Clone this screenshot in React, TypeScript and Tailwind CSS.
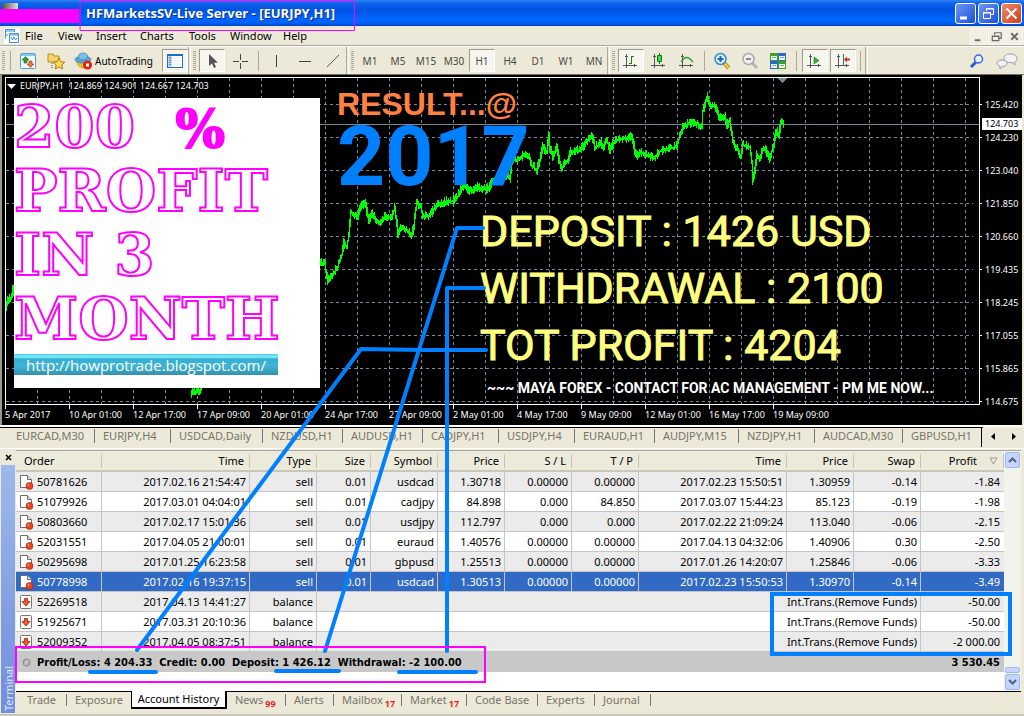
import type { ReactNode } from 'react';

const MENU: [string, string][] = [
  ['File', 'w-[33px]'],
  ['View', 'w-[38px]'],
  ['Insert', 'w-[44px]'],
  ['Charts', 'w-[49px]'],
  ['Tools', 'w-[41px]'],
  ['Window', 'w-[53px]'],
  ['Help', 'w-[33px]'],
];

const CHART_TABS: [string, string][] = [
  ['EURCAD,M30', 'w-[87px]'],
  ['EURJPY,H4', 'w-[76px]'],
  ['USDCAD,Daily', 'w-[92px]'],
  ['NZDUSD,H1', 'w-[80px]'],
  ['AUDUSD,H1', 'w-[80px]'],
  ['CADJPY,H1', 'w-[76px]'],
  ['USDJPY,H4', 'w-[76px]'],
  ['EURAUD,H1', 'w-[80px]'],
  ['AUDJPY,M15', 'w-[84px]'],
  ['NZDJPY,H1', 'w-[76px]'],
  ['AUDCAD,M30', 'w-[88px]'],
];

const PRICES = ['125.420', '124.230', '123.040', '121.850', '120.660', '119.435', '118.245', '117.055', '115.865', '114.675'];

const TIMES = [
  '5 Apr 2017', '10 Apr 01:00', '12 Apr 17:00', '17 Apr 09:00', '20 Apr 01:00', '24 Apr 17:00', '27 Apr 09:00',
  '2 May 01:00', '4 May 17:00', '9 May 09:00', '12 May 01:00', '16 May 17:00', '19 May 09:00',
];

const TRADES = [
  ['50781626', '2017.02.16 21:54:47', 'sell', '0.01', 'usdcad', '1.30718', '0.00000', '0.00000', '2017.02.23 15:50:51', '1.30959', '-0.14', '-1.84'],
  ['51079926', '2017.03.01 04:04:01', 'sell', '0.01', 'cadjpy', '84.898', '0.000', '84.850', '2017.03.07 15:44:23', '85.123', '-0.19', '-1.98'],
  ['50803660', '2017.02.17 15:01:36', 'sell', '0.01', 'usdjpy', '112.797', '0.000', '0.000', '2017.02.22 21:09:24', '113.040', '-0.06', '-2.15'],
  ['52031551', '2017.04.05 21:00:01', 'sell', '0.01', 'euraud', '1.40576', '0.00000', '0.00000', '2017.04.13 04:32:06', '1.40906', '0.30', '-2.50'],
  ['50295698', '2017.01.25 16:23:58', 'sell', '0.01', 'gbpusd', '1.25513', '0.00000', '0.00000', '2017.01.26 14:20:07', '1.25846', '-0.06', '-3.33'],
  ['50778998', '2017.02.16 19:37:15', 'sell', '0.01', 'usdcad', '1.30513', '0.00000', '0.00000', '2017.02.23 15:50:53', '1.30970', '-0.14', '-3.49'],
];

const BALANCES = [
  ['52269518', '2017.04.13 14:41:27', '-50.00'],
  ['51925671', '2017.03.31 20:10:36', '-50.00'],
  ['52009352', '2017.04.05 08:37:51', '-2 000.00'],
];

const COLUMNS: [string, string][] = [
  ['Order', 'w-[86px]'], ['Time', 'w-[148px]'], ['Type', 'w-[67px]'], ['Size', 'w-[54px]'], ['Symbol', 'w-[67px]'], ['Price', 'w-[67px]'],
  ['S / L', 'w-[67px]'], ['T / P', 'w-[67px]'], ['Time', 'w-[148px]'], ['Price', 'w-[67px]'], ['Swap', 'w-[67px]'], ['Profit', ''],
];

const TERMINAL_TABS: [string, string, string?][] = [
  ['Trade', 'w-[51px]'],
  ['Exposure', 'w-[64px]'],
  ['Account History', 'w-[96px]'],
  ['News', 'w-[59px]', '99'],
  ['Alerts', 'w-[48px]'],
  ['Mailbox', 'w-[68px]', '17'],
  ['Market', 'w-[65px]', '17'],
  ['Code Base', 'w-[71px]'],
  ['Experts', 'w-[57px]'],
  ['Journal', 'w-[56px]'],
];

const SERIES: [number, number][][] = [
  [[6, 308], [8, 300], [12, 297], [13, 289], [15, 295]],
  [[191, 395], [193, 391], [197, 392], [202, 387]],
  [
    [318, 258], [321, 262], [325, 264], [328, 280], [333, 274], [338, 266], [342, 254], [344, 243], [347, 248], [349, 234], [351, 212],
    [355, 214], [358, 216], [361, 207], [365, 202], [367, 211], [369, 222], [372, 212], [375, 217], [380, 223], [385, 217], [392, 216],
    [395, 208], [397, 224], [398, 234], [402, 227], [407, 230], [412, 234], [414, 227], [416, 207], [417, 202], [421, 206], [423, 216],
    [430, 216], [435, 207], [440, 204], [447, 201], [453, 201], [458, 196], [462, 187], [465, 184], [467, 186], [469, 191], [477, 187],
    [487, 189], [493, 182], [503, 177], [508, 174], [510, 179], [512, 164], [514, 157], [517, 161], [520, 157], [529, 154], [531, 164],
    [537, 170], [540, 159], [543, 147], [547, 152], [549, 134], [550, 147], [553, 157], [557, 146], [559, 160], [562, 167], [567, 162],
    [571, 152], [580, 150], [585, 144], [592, 135], [595, 146], [598, 146], [601, 141], [603, 148], [607, 138], [610, 151], [613, 144],
    [617, 139], [630, 137], [633, 139], [635, 151], [637, 156], [640, 152], [648, 155], [655, 157], [660, 151], [668, 149], [677, 146],
    [680, 135], [683, 127], [687, 124], [695, 122], [702, 126], [703, 111], [706, 100], [708, 97], [711, 108], [713, 104], [717, 109],
    [719, 117], [725, 117], [727, 125], [730, 120], [732, 132], [733, 142], [738, 149], [741, 156], [743, 145], [750, 146], [752, 161],
    [753, 180], [755, 171], [757, 153], [760, 160], [762, 150], [765, 148], [768, 154], [769, 159], [772, 151], [774, 146], [776, 130],
    [779, 136], [781, 121], [784, 124],
  ],
];

function pricePath(points: [number, number][]) {
  let seed = 11;
  const noise = () => {
    seed = (seed * 1103515245 + 12345) % 2147483648;
    return seed / 2147483648;
  };
  let d = '';
  for (let i = 0; i < points.length - 1; i++) {
    const [x0, y0] = points[i];
    const [x1, y1] = points[i + 1];
    for (let x = x0; x < x1; x++) {
      const y = y0 + ((y1 - y0) * (x - x0)) / (x1 - x0);
      const next = y0 + ((y1 - y0) * (x + 1 - x0)) / (x1 - x0);
      const top = Math.round(Math.min(y, next) - noise() * 5);
      const bottom = Math.round(Math.max(y, next) + 1 + noise() * 4);
      d += `M${x + 0.5} ${top}V${bottom}`;
    }
  }
  return d;
}

function Plot() {
  return (
    <svg className="block h-full w-full" shapeRendering="crispEdges" aria-hidden="true">
      <g transform="translate(-6 -78)">
        <g stroke="#778899" strokeDasharray="3 3">
          {Array.from({ length: 60 }, (_, i) => (
            <line key={i} x1={37.5 + i * 32} x2={37.5 + i * 32} y1="78" y2="404" />
          ))}
          {PRICES.map((p, i) => (
            <line key={p} x1="6" x2="100%" y1={104.5 + i * 33} y2={104.5 + i * 33} />
          ))}
        </g>
        <path d="M6 124.500H3000" stroke="#778899" />
        <path d="M777 78h11l-5.500 5z" fill="#778899" />
        {SERIES.map((s, i) => (
          <path key={i} d={pricePath(s)} stroke="#00ff00" />
        ))}
      </g>
    </svg>
  );
}

function Grip() {
  return (
    <svg className="mx-px h-5 w-[3px] shrink-0" shapeRendering="crispEdges" aria-hidden="true">
      <path d="M1.500 0V20" stroke="#aca899" strokeWidth="3" strokeDasharray="1 1" />
    </svg>
  );
}

function Sep() {
  return <span className="h-5 w-px shrink-0 bg-[#aca899]" />;
}

function GroupEnd() {
  return <span className="h-full w-[3px] shrink-0 border-r border-l border-r-white border-l-[#aca899]" />;
}

function Tool({ label, pressed, children }: { label: string; pressed?: boolean; children: ReactNode }) {
  return (
    <button
      aria-label={label}
      aria-pressed={pressed}
      className={
        'flex h-[23px] w-[26px] shrink-0 items-center justify-center border ' +
        (pressed ? 'border-t-[#9d9a8b] border-l-[#9d9a8b] border-r-white border-b-white bg-[#f6f5ee]' : 'border-transparent')
      }
    >
      {children}
    </button>
  );
}

function Icon({ children }: { children: ReactNode }) {
  return (
    <svg width="18" height="18" viewBox="0 0 18 18" fill="none" aria-hidden="true">
      {children}
    </svg>
  );
}

function Axes() {
  return (
    <g stroke="#555" shapeRendering="crispEdges">
      <path d="M4.500 2v14M1 13.500h14" />
      <path d="M3 4.500h3M12.500 12v3" />
    </g>
  );
}

function TitleBar() {
  return (
    <header className="relative flex h-[26px] items-center bg-[linear-gradient(#2f86f6_0,#0f63ea_3px,#0054e3_9px,#0058ee_13px,#0066ff_19px,#0062fb_23px,#0040c0_26px)] pr-[2px] pl-[2px]">
      <span className="mb-2 h-3 w-4 shrink-0 bg-gradient-to-r from-neutral-600 to-neutral-200" />
      <span className="ml-[68px] flex-1 font-['Open_Sans',sans-serif] text-[13px] font-bold whitespace-nowrap text-white [text-shadow:1px_1px_0_#0a2f8a]">
        HFMarketsSV-Live Server - [EURJPY,H1]
      </span>
      <span className="absolute top-[9px] left-0 h-[14px] w-[79px] bg-[#ff00ff]" />
      <div className="flex gap-[2px]">
        <button aria-label="Minimize" className="h-[21px] w-[21px] rounded-[3px] border border-white bg-gradient-to-br from-[#6f96f0] to-[#1c4bd8]">
          <svg className="h-full w-full" viewBox="0 0 19 19" aria-hidden="true"><path d="M4 14h7" stroke="#fff" strokeWidth="3" /></svg>
        </button>
        <button aria-label="Restore" className="h-[21px] w-[21px] rounded-[3px] border border-white bg-gradient-to-br from-[#6f96f0] to-[#1c4bd8]">
          <svg className="h-full w-full" viewBox="0 0 19 19" fill="none" stroke="#fff" aria-hidden="true">
            <path d="M7.500 7V4.500h7v6h-2.500M7 5h8M4.500 8.500h7v6h-7zM4 9h8" />
          </svg>
        </button>
        <button aria-label="Close" className="h-[21px] w-[21px] rounded-[3px] border border-white bg-gradient-to-br from-[#f0896a] to-[#cf3a12]">
          <svg className="h-full w-full" viewBox="0 0 19 19" aria-hidden="true"><path d="M4.500 4.500l10 10M14.500 4.500l-10 10" stroke="#fff" strokeWidth="2" /></svg>
        </button>
      </div>
    </header>
  );
}

function MenuBar() {
  return (
    <nav className="flex h-5 items-center pr-px pl-1">
      <svg width="16" height="16" viewBox="0 0 16 16" fill="none" className="mr-[5px] shrink-0" aria-hidden="true">
        <path d="M0 0h16v16H0z" fill="#fff" />
        <path d="M1.500 10.500v-9h9V4M1 3h10" stroke="#3f8fd8" />
        <path d="M5.500 5.500h9v9h-9zM5 7h10" stroke="#3f8fd8" />
        <path d="M7 9l1.500 3 1.500-3 1.500 3L13 10M2.500 6l1 2" stroke="#3f8fd8" />
      </svg>
      <div className="flex flex-1">
        {MENU.map(([m, w]) => (
          <button key={m} className={`${w} text-left`}>{m}</button>
        ))}
      </div>
      <div className="flex gap-px">
        {[
          ['Minimize chart', 'M4 12h6'],
          ['Restore chart', 'M6 6V4h7v6h-2M6 4h7M3.500 7.500h7v5h-7zM3 8h8'],
          ['Close chart', 'M4.500 4.500l7 7M11.500 4.500l-7 7'],
        ].map(([label, d]) => (
          <button key={label} aria-label={label} className="h-[17px] w-[17px] border border-[#f8f7f2] bg-[#f1efe4]">
            <svg viewBox="0 0 16 16" className="h-full w-full" fill="none" stroke="#6b6a60" aria-hidden="true">
              <path d={d} strokeWidth={label === 'Restore chart' ? 1.3 : 2} />
            </svg>
          </button>
        ))}
      </div>
    </nav>
  );
}

function Toolbar() {
  return (
    <div className="flex h-7 items-center border-t border-white bg-[#ece9d8] pl-px shadow-[0_-1px_0_#aca899]">
      <Grip />
      <span className="w-1 shrink-0" />
      <Sep />
      <div className="ml-1 flex shrink-0 items-center gap-[2px]">
        <Tool label="New order">
          <Icon>
            <rect x="1.500" y="1.500" width="15" height="15" rx="1" fill="#f3f9ff" stroke="#4f9fd8" />
            <path d="M2 3h14" stroke="#8cc4ee" strokeWidth="2" />
            <path d="M6.500 4.500l3.500 3.500H8v3H5V8H3z" fill="#2aa52a" stroke="#147214" strokeWidth=".6" />
            <path d="M11.500 15.500L8 12h2V9h3v3h2z" fill="#f0703a" stroke="#b43a10" strokeWidth=".6" />
          </Icon>
        </Tool>
        <Tool label="Navigator">
          <Icon>
            <path d="M1 2h5l1 2h5v6H1z" fill="#f6d36b" stroke="#b78a1c" />
            <path d="M5 11v5" stroke="#444" strokeDasharray="1 1" />
            <path d="M12 6l1.800 3.700 4 .5-3 2.700.8 4-3.600-2-3.600 2 .8-4-3-2.700 4-.5z" fill="#ffd94e" stroke="#a87c14" />
          </Icon>
        </Tool>
      </div>
      <button className="ml-px flex h-[23px] w-[89px] shrink-0 items-center gap-[3px] pl-1 text-[10px] text-black">
        <Icon>
          <path d="M2 8c1 5 4 8 7 8s6-2 7-6l-7 1z" fill="#f0c030" stroke="#b08818" strokeWidth=".6" />
          <ellipse cx="9" cy="7.500" rx="8" ry="3.500" fill="#5aa7d6" stroke="#2d7aac" strokeWidth=".6" />
          <ellipse cx="9" cy="4.500" rx="4.500" ry="3.500" fill="#7cc0e6" stroke="#2d7aac" strokeWidth=".6" />
          <circle cx="13.500" cy="13" r="4.500" fill="#dc2310" />
          <path d="M12 11.500h3v3h-3z" fill="#fff" />
        </Icon>
        AutoTrading
      </button>
      <div className="ml-[3px] flex h-full shrink-0 items-center">
        <Tool label="Terminal" pressed>
          <Icon>
            <rect x="1.500" y="2.500" width="15" height="13" fill="#fff" stroke="#1d6fc2" />
            <path d="M1 3h16" stroke="#1d6fc2" strokeWidth="2" />
            <path d="M2 4h4v11H2z" fill="#b9dcf5" />
            <path d="M4 5v2" stroke="#d22" /><path d="M4 8v6" stroke="#333" strokeDasharray="1 1" />
            <path d="M8 6h7M8 9h7M8 12h7" stroke="#dde9f5" />
          </Icon>
        </Tool>
        <GroupEnd />
        <span className="w-px" />
        <Grip />
        <span className="w-[2px]" />
        <Tool label="Cursor" pressed>
          <Icon><path d="M6 2v12l3-2.500 2 4.500 2-1-2-4.200h4z" fill="#555" /></Icon>
        </Tool>
        <span className="w-[2px]" />
        <Tool label="Crosshair">
          <Icon><path d="M9.500 2v6M9.500 11v6M2 9.500h6M11 9.500h6" stroke="#444" shapeRendering="crispEdges" /></Icon>
        </Tool>
        <span className="w-[5px]" />
        <Sep />
        <span className="w-[5px]" />
        <Tool label="Vertical line"><Icon><path d="M8.500 3v12" stroke="#444" /></Icon></Tool>
        <span className="w-[2px]" />
        <Tool label="Horizontal line"><Icon><path d="M3 9.500h12" stroke="#444" /></Icon></Tool>
        <span className="w-[2px]" />
        <Tool label="Trendline"><Icon><path d="M3 15L15 3" stroke="#555" /></Icon></Tool>
        <GroupEnd />
        <span className="w-px" />
        <Grip />
        <span className="w-[2px]" />
      </div>
      <div className="flex shrink-0 gap-[2px] text-[10px] text-[#4a4a44]">
        {['M1', 'M5', 'M15', 'M30', 'H1', 'H4', 'D1', 'W1', 'MN'].map((t) => (
          <button
            key={t}
            aria-pressed={t === 'H1'}
            className={
              'h-[23px] w-[26px] border ' +
              (t === 'H1' ? 'border-t-[#9d9a8b] border-l-[#9d9a8b] border-r-white border-b-white bg-[#f6f5ee]' : 'border-transparent')
            }
          >
            {t}
          </button>
        ))}
      </div>
      <div className="flex h-full flex-1 items-center">
        <GroupEnd />
        <span className="w-px" />
        <Grip />
        <span className="w-[2px]" />
        <Tool label="Bar chart" pressed>
          <Icon><Axes /><path d="M9.500 4v8M9.500 4.500h2.500M7 11.500h2.500" stroke="#0a8a0a" shapeRendering="crispEdges" /></Icon>
        </Tool>
        <span className="w-[2px]" />
        <Tool label="Candlesticks">
          <Icon><Axes /><path d="M9.500 1v11" stroke="#0a7a0a" /><path d="M7.500 3.500h4v6h-4z" fill="#3ddb4d" stroke="#0a7a0a" /></Icon>
        </Tool>
        <span className="w-[2px]" />
        <Tool label="Line chart">
          <Icon><Axes /><path d="M3 10c4-6 7-6 12 0" stroke="#2a9a2a" strokeWidth="1.300" /></Icon>
        </Tool>
        <span className="w-1" />
        <Sep />
        <span className="w-1" />
        <Tool label="Zoom in">
          <Icon>
            <path d="M11 11l5 5" stroke="#b98b17" strokeWidth="4" /><path d="M11 11l5 5" stroke="#f2d24c" strokeWidth="2" />
            <circle cx="7.500" cy="7" r="5.500" fill="#e2f2ff" stroke="#2f8bd2" strokeWidth="1.500" /><path d="M4.500 7h6M7.500 4v6" stroke="#1768b8" strokeWidth="2" />
          </Icon>
        </Tool>
        <span className="w-[2px]" />
        <Tool label="Zoom out">
          <Icon>
            <path d="M11 11l5 5" stroke="#b5b5b5" strokeWidth="3" />
            <circle cx="7.500" cy="7" r="5.500" fill="#efefef" stroke="#aaa" strokeWidth="1.500" /><path d="M5 7h5" stroke="#888" strokeWidth="2" />
          </Icon>
        </Tool>
        <span className="w-[2px]" />
        <Tool label="Tile windows">
          <Icon>
            <path d="M1 1h8v8H1zM9 9h8v8H9z" fill="#3da21d" /><path d="M9 1h8v8H9zM1 9h8v8H1z" fill="#2a68cf" />
            <path d="M2 4h6v4H2zM10 4h6v4h-6zM2 12h6v4H2zM10 12h6v4h-6z" fill="#eaf3ea" />
            <path d="M3 5.500h4M11 5.500h4M3 13.500h4M11 13.500h4" stroke="#89a8a8" />
          </Icon>
        </Tool>
        <span className="w-[5px]" />
        <Sep />
        <span className="w-[5px]" />
        <Tool label="Auto scroll" pressed>
          <Icon><Axes /><path d="M8 5l5 3.500-5 3.500z" fill="#35b535" stroke="#0a7a0a" strokeWidth=".6" /></Icon>
        </Tool>
        <span className="w-[2px]" />
        <Tool label="Chart shift" pressed>
          <Icon><Axes /><path d="M9.500 2v11" stroke="#1d6fb2" /><path d="M10 7.500l3-3v2h3v2h-3v2z" fill="#c83814" /></Icon>
        </Tool>
        <span className="w-1" />
        <Sep />
        <span className="w-1" />
        <GroupEnd />
      </div>
      <div className="mr-1 flex shrink-0 gap-1">
        <Tool label="Search">
          <Icon><path d="M8 10l-5 5" stroke="#2d5bd0" strokeWidth="3" /><circle cx="10.500" cy="7" r="4" fill="#eef4ff" stroke="#3a68d6" strokeWidth="1.500" /></Icon>
        </Tool>
        <Tool label="Chat">
          <svg width="22" height="18" viewBox="0 0 22 18" fill="#f4f4f6" stroke="#9a9aa4" aria-hidden="true">
            <path d="M14 2c4 0 7 1.800 7 4.500 0 1.800-1 3-2.500 3.500l.5 3-3-2.500c-5 .5-8-1.500-8-4S10 2 14 2z" />
            <path d="M6 8c3 0 5 1.300 5 3.300S9 14.500 6 14.500L4 17v-3C2 13.500 1 12.500 1 11.300 1 9.500 3 8 6 8z" />
          </svg>
        </Tool>
      </div>
    </div>
  );
}

function PromoPanel() {
  return (
    <div className="absolute top-[23px] left-[12px] h-[290px] w-[306px] bg-white font-['DejaVu_Serif',serif]">
      <h1 className="-mt-[3px] text-[58px] leading-[64px] font-bold whitespace-nowrap text-white [-webkit-text-stroke:2px_#ff00ff]">
        200 &nbsp;<span className="text-[52px] leading-[50px] text-[#ff00ff]">%</span>
        <br />
        PROFIT
        <br />
        IN 3
        <br />
        MONTH
      </h1>
      <a
        href="http://howprotrade.blogspot.com/"
        className="mt-[3px] flex h-[21px] w-[264px] items-center justify-center bg-[linear-gradient(#4fd0e8_0,#7fefff_3px,#35aed0_5px,#3fb6d8_12px,#3490ac_21px)] font-['Open_Sans',sans-serif] text-[15px] text-white"
      >
        http://howprotrade.blogspot.com/
      </a>
    </div>
  );
}

function ChartWindow() {
  return (
    <section className="relative flex h-[350px] border-r-2 border-l-2 border-r-[#ece9d8] border-l-[#9d9a8b] bg-black pt-[2px] pl-[3px] text-[9px] text-white">
      <div className="min-w-0 flex-1 overflow-hidden">
        <div className="h-[328px] border border-white">
          <Plot />
        </div>
        <div className="flex">
          {TIMES.map((t) => (
            <span key={t} className="w-16 shrink-0 whitespace-nowrap">
              <span className="block h-1 w-px bg-white" />
              <span className="block leading-[11px]">{t}</span>
            </span>
          ))}
        </div>
      </div>
      <div className="relative w-[42px] shrink-0 pt-[11px]">
        {PRICES.map((p) => (
          <div key={p} className="flex h-[33px] items-center gap-[3px]">
            <span className="h-px w-[2px] bg-white" />
            {p}
          </div>
        ))}
        <span className="absolute top-[41px] left-[2px] w-10 bg-white pl-[3px] leading-[12px] text-black">124.703</span>
      </div>
      <div className="absolute top-[5px] left-[5px] flex items-center gap-1 leading-[12px]">
        <svg width="9" height="5" aria-hidden="true"><path d="M0 0h9L4.500 5z" fill="#fff" /></svg>
        <span>EURJPY,H1&nbsp; 124.869 124.901 124.667 124.703</span>
      </div>
      <PromoPanel />
      <p className="absolute top-[13px] left-[335px] font-['Liberation_Sans',sans-serif] text-[32px] leading-[32px] font-bold text-[#ff8040]">RESULT...@</p>
      <p className="absolute top-[46px] left-[335px] font-['Roboto',sans-serif] text-[84px] leading-[72px] font-bold text-[#0080ff]">2017</p>
      <div className="absolute top-[128px] left-[478px] font-['Roboto',sans-serif] text-[43px] leading-[57px] whitespace-nowrap text-[#ffff80] [-webkit-text-stroke:1px_#ffff80]">
        <p>DEPOSIT : 1426 USD</p>
        <p>WITHDRAWAL : 2100</p>
        <p>TOT PROFIT : 4204</p>
      </div>
      <p className="absolute top-[304px] left-[485px] font-['Roboto',sans-serif] text-[14px] leading-[18px] font-bold whitespace-nowrap">
        ~~~ MAYA FOREX - CONTACT FOR AC MANAGEMENT - PM ME NOW...
      </p>
    </section>
  );
}

function ChartTabs() {
  return (
    <div className="flex h-[24px] items-start border-t-2 border-b border-t-white border-b-white">
      <div className="flex h-[20px] flex-1 items-start overflow-hidden border-t border-t-black pl-2 text-[#77756a]">
        {CHART_TABS.map(([t, w]) => (
          <button key={t} className={`${w} mt-px h-[14px] shrink-0 border-r border-r-[#77756a] pl-2 text-left leading-[14px] whitespace-nowrap`}>{t}</button>
        ))}
        <button className="h-[19px] w-[79px] shrink-0 border-r border-r-black pb-[3px] pl-2 text-left">GBPUSD,H1</button>
      </div>
      <div className="flex h-[18px] w-[41px] items-center justify-around">
        <button aria-label="Scroll tabs left"><svg width="4" height="7" aria-hidden="true"><path d="M4 0v7L0 3.500z" /></svg></button>
        <button aria-label="Scroll tabs right"><svg width="4" height="7" aria-hidden="true"><path d="M0 0v7l4-3.500z" /></svg></button>
      </div>
    </div>
  );
}

function SellIcon() {
  return (
    <svg width="15" height="16" viewBox="0 0 15 16" className="shrink-0" aria-hidden="true">
      <path d="M1.500 1.500h7l4 4v8h-11z" fill="#fff" stroke="#6d6d6d" />
      <path d="M8.500 1.500v4h4" fill="#ddd" stroke="#6d6d6d" />
      <circle cx="10.500" cy="12" r="3.500" fill="#e8431c" stroke="#a32508" strokeWidth=".6" />
      <circle cx="9.500" cy="11" r="1" fill="#ff9a78" />
    </svg>
  );
}

function BalanceIcon() {
  return (
    <svg width="15" height="16" viewBox="0 0 15 16" className="shrink-0" aria-hidden="true">
      <rect x="1.500" y="1.500" width="11" height="13" rx="1" fill="#fafafa" stroke="#777" />
      <path d="M5.500 4.500h3v3h2.500L7 12 3 7.500h2.500z" fill="#f0592c" stroke="#9c2407" strokeWidth=".8" />
    </svg>
  );
}

const CELL = 'h-5 border-r border-b border-[#c5c5c5] p-0 pr-[3px] text-right whitespace-nowrap';

function HistoryTable() {
  return (
    <table className="w-full table-fixed border-separate border-spacing-0 bg-white leading-[15px]">
      <thead className="bg-[#ebeadb]">
        <tr>
          {COLUMNS.map(([c, w], i) => (
            <th key={i} scope="col" className={`${w} h-[21px] border-b-2 border-b-[#cbc7b8] p-0 font-normal`}>
              <div className={'flex h-[14px] items-center border-r border-r-[#c5c2b2] ' + (i === 0 ? 'pl-2' : 'justify-end pr-[5px]')}>
                {c}
                {c === 'Profit' && (
                  <svg width="9" height="8" className="ml-3" fill="none" aria-hidden="true"><path d="M1 1h7L4.500 7z" stroke="#9d9a8b" /></svg>
                )}
              </div>
            </th>
          ))}
        </tr>
      </thead>
      <tbody>
        {TRADES.map((row, r) => (
          <tr key={row[0]} className={r === 5 ? 'bg-[#316ac5] text-white' : r % 2 ? 'bg-white' : 'bg-[#ebebeb]'}>
            {row.map((v, c) =>
              c === 0 ? (
                <td key={c} className="h-5 border-r border-b border-[#c5c5c5] p-0">
                  <span className="flex items-center gap-[3px] pl-[3px]"><SellIcon />{v}</span>
                </td>
              ) : (
                <td key={c} className={c === 11 ? 'h-5 border-b border-[#c5c5c5] p-0 pr-1 text-right' : CELL}>{v}</td>
              ),
            )}
          </tr>
        ))}
        {BALANCES.map(([order, time, profit], r) => (
          <tr key={order} className={r % 2 ? 'bg-white' : 'bg-[#ebebeb]'}>
            <td className="h-5 border-r border-b border-[#c5c5c5] p-0">
              <span className="flex items-center gap-[3px] pl-[3px]"><BalanceIcon />{order}</span>
            </td>
            <td className={CELL}>{time}</td>
            <td className={CELL}>balance</td>
            <td className={CELL} colSpan={8}>Int.Trans.(Remove Funds)</td>
            <td className="h-5 border-b border-[#c5c5c5] p-0 pr-1 text-right">{profit}</td>
          </tr>
        ))}
      </tbody>
      <tfoot>
        <tr className="bg-[#c8c8c8] font-['DejaVu_Sans_Condensed',sans-serif] font-bold">
          <td colSpan={11} className="h-5 p-0">
            <span className="flex items-center gap-[6px] pl-[6px]">
              <svg width="9" height="9" aria-hidden="true"><circle cx="4.500" cy="4.500" r="3.500" fill="#b5b5b5" stroke="#888" /><path d="M2.500 6.500l4-4" stroke="#ddd" /></svg>
              <span className="whitespace-nowrap">Profit/Loss: 4 204.33&nbsp; Credit: 0.00&nbsp; Deposit: 1 426.12&nbsp; Withdrawal: -2 100.00</span>
            </span>
          </td>
          <td className="h-5 p-0 pr-1 text-right">3 530.45</td>
        </tr>
      </tfoot>
    </table>
  );
}

function ScrollButton({ label, d }: { label: string; d: string }) {
  return (
    <button aria-label={label} className="flex h-[16px] w-[15px] items-center justify-center rounded-[2px] border border-[#9fb8ee] bg-[#c6d5fd]">
      <svg width="9" height="6" fill="none" aria-hidden="true"><path d={d} stroke="#4d6185" strokeWidth="2" /></svg>
    </button>
  );
}

function Terminal() {
  return (
    <section className="flex flex-1 border-b-2 border-b-[#c9c6b8] pt-px pb-px">
      <aside className="flex w-[15px] shrink-0 flex-col pl-px">
        <button aria-label="Close terminal" className="flex h-[15px] items-center justify-center">
          <svg width="7" height="7" aria-hidden="true"><path d="M1 1l5 5M6 1L1 6" stroke="#000" strokeWidth="1.500" /></svg>
        </button>
        <div className="flex flex-1 justify-center bg-gradient-to-b from-[#9db9eb] to-[#728ddc] pb-[2px] text-[#dfe8fb]">
          <span className="rotate-180 leading-[13px] [writing-mode:vertical-rl]">Terminal</span>
        </div>
      </aside>
      <div className="mr-[3px] ml-px flex min-w-0 flex-1 flex-col border-t border-t-[#aca899]">
        <div className="flex flex-1 border-b border-b-black bg-white">
          <div className="min-w-0 flex-1"><HistoryTable /></div>
          <div className="flex w-[17px] shrink-0 flex-col items-center bg-[#f3f3ee] py-px">
            <ScrollButton label="Scroll up" d="M1 5l3.500-3.500L8 5" />
            <span className="flex-1" />
            <span className="mb-px h-[6px] w-[15px] rounded-[2px] border border-[#9fb8ee] bg-[#c6d5fd]" />
            <ScrollButton label="Scroll down" d="M1 1l3.500 3.500L8 1" />
          </div>
        </div>
        <div className="flex h-[21px] items-start text-[#77756a]" role="tablist">
          {TERMINAL_TABS.map(([t, w, n], i) =>
            t === 'Account History' ? (
              <button key={t} role="tab" aria-selected="true" className={`${w} -mt-px h-[18px] shrink-0 border-r-2 border-b-2 border-l border-black bg-white whitespace-nowrap text-black`}>
                {t}
              </button>
            ) : (
              <button
                key={t}
                role="tab"
                aria-selected="false"
                className={`${w} mt-[2px] flex h-3 shrink-0 items-center gap-[2px] border-r leading-[12px] whitespace-nowrap ${i === 0 ? 'pl-[11px]' : 'pl-2'} ${t === 'Exposure' ? 'border-transparent' : 'border-[#77756a]'}`}
              >
                {t}
                {n && <span className="mt-[6px] text-[9px] leading-[9px] font-bold text-[#e81c24]">{n}</span>}
              </button>
            ),
          )}
        </div>
      </div>
    </section>
  );
}

function Annotations() {
  return (
    <svg className="pointer-events-none absolute inset-0 h-full w-full" fill="none" stroke="#0080ff" strokeWidth="4" strokeLinecap="round" strokeLinejoin="round" aria-hidden="true">
      <path d="M483 228H457L325 651" />
      <path d="M484 288H447V651" />
      <path d="M486 350H422L361 349L137 650" />
      <path d="M90 672H156M276 671H339M399 672H476" />
      <path d="M772 594H1010V654H772z" strokeLinejoin="miter" />
      <path d="M16 647H485V682H16z" stroke="#ff00ff" strokeWidth="2" strokeLinejoin="miter" />
      <path d="M80.500 1.500H354.500V30.500H80.500z" stroke="#ff00ff" strokeWidth="1" />
    </svg>
  );
}

export default function App() {
  return (
    <main className="relative flex min-h-screen w-full flex-col overflow-hidden bg-[#ece9d8] font-['Noto_Sans',sans-serif] text-[11px] leading-[14px] text-black">
      <TitleBar />
      <MenuBar />
      <Toolbar />
      <div className="h-px bg-[#716f64]" />
      <ChartWindow />
      <ChartTabs />
      <Terminal />
      <Annotations />
    </main>
  );
}
